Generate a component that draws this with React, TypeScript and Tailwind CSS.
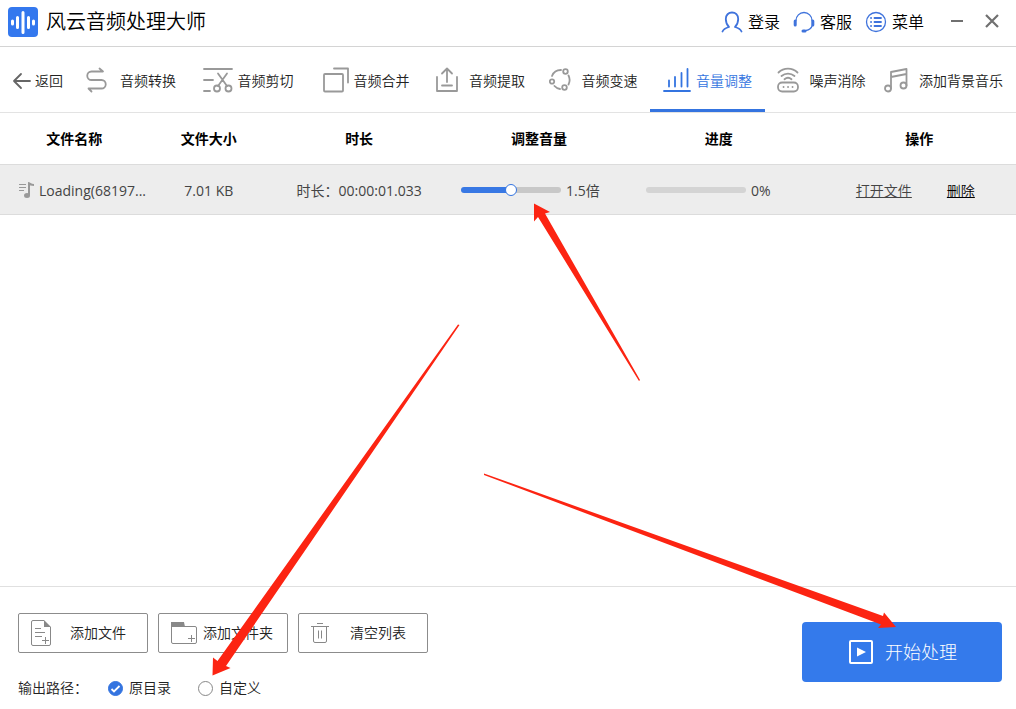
import { useState } from 'react'
import type { ReactNode } from 'react'

const Svg = ({ w, h = 26, children }: { w: number; h?: number; children: ReactNode }) => (
  <svg
    width={w}
    height={h}
    viewBox={`0 0 ${w} ${h}`}
    fill="none"
    stroke="currentColor"
    strokeWidth="1.8"
    strokeLinecap="round"
    strokeLinejoin="round"
    aria-hidden="true"
    className="shrink-0"
  >
    {children}
  </svg>
)

const ConvertIcon = () => (
  <Svg w={22}>
    <path d="M14.5 1.5 18 4.5H6.5a4 4 0 0 0 0 8.500h10a4.200 4.200 0 0 1 0 8.500H3.500l3 3" />
  </Svg>
)

const CutIcon = () => (
  <Svg w={30}>
    <path d="M1 2h28M1 13h9M1 24h6M15 6.500 24 19M24 6.500 15 19" />
    <circle cx="14" cy="21.500" r="3" />
    <circle cx="25.500" cy="21.500" r="3" />
  </Svg>
)

const MergeIcon = () => (
  <Svg w={26}>
    <rect x="1" y="7" width="19" height="17.500" rx="1" />
    <path d="M11 1.500h14v14" />
  </Svg>
)

const ExtractIcon = () => (
  <Svg w={22}>
    <path d="M1 10v14h20V10M11 15V2M6 6.500 11 1.500l5 5M6 18.500h10" />
  </Svg>
)

const SpeedIcon = () => (
  <Svg w={22}>
    <circle cx="16.500" cy="4.500" r="2.300" />
    <circle cx="3" cy="14.500" r="2.200" />
    <circle cx="15.500" cy="20.500" r="2.300" />
    <path d="M3 9a9.500 9.500 0 0 1 9-6M19.500 8.500a10 10 0 0 1 0 9M5.500 19a9 9 0 0 0 5.500 3" />
  </Svg>
)

const VolumeIcon = () => (
  <Svg w={28}>
    <path d="M1 24h26M6 19.500v-6M12 19.500V10M18.500 19.500V6M24.500 19.500V2" />
  </Svg>
)

const NoiseIcon = () => (
  <Svg w={22}>
    <rect x="1" y="15.500" width="20" height="9" rx="4.200" />
    <path d="M1.500 5.500a13.500 13.500 0 0 1 19 0M4.500 9a10 10 0 0 1 13 0M7.500 12.200a5.500 5.500 0 0 1 7 0M6.500 20h.1M11 20h.1M15.500 20h.1" />
  </Svg>
)

const MusicIcon = () => (
  <Svg w={24}>
    <circle cx="4" cy="21.500" r="3" />
    <circle cx="19.500" cy="18.500" r="3" />
    <path d="M7 21.500V5l15.500-3v16.500M7 10l15.500-3" />
  </Svg>
)

const tabs = [
  { label: '音频转换', Icon: ConvertIcon, gap: 'gap-[13px]' },
  { label: '音频剪切', Icon: CutIcon, gap: 'gap-[5px]' },
  { label: '音频合并', Icon: MergeIcon, gap: 'gap-[5px]' },
  { label: '音频提取', Icon: ExtractIcon, gap: 'gap-[11px]' },
  { label: '音频变速', Icon: SpeedIcon, gap: 'gap-[11px]' },
  { label: '音量调整', Icon: VolumeIcon, gap: 'gap-[5px]' },
  { label: '噪声消除', Icon: NoiseIcon, gap: 'gap-[11px]' },
  { label: '添加背景音乐', Icon: MusicIcon, gap: 'gap-[11px]' },
]

function TitleBar() {
  return (
    <header className="flex h-[47px] items-center border-b border-[#d4d4d4] pl-2 pr-4 pb-0.5">
      <svg width="30" height="30" viewBox="0 0 30 30" aria-hidden="true">
        <rect width="30" height="30" rx="4" fill="#3478ee" />
        <path
          d="M4.500 14v3M9.500 10.500v10M15 5.500v20M20.500 10.500v10M25.500 14v3"
          stroke="#fff"
          strokeWidth="3"
          strokeLinecap="round"
        />
      </svg>
      <h1 className="ml-2 flex-1 text-xl leading-6 font-[350] text-black">风云音频处理大师</h1>

      <div className="flex items-center gap-[13px] text-base leading-6 font-[350] text-black">
        <button type="button" className="flex items-center gap-[5px]">
          <span className="text-[#3f73dc]">
            <Svg w={22} h={22}>
              <path d="M1.500 20.500c1-2.500 3-3.500 6.500-4.500-2-2-3.200-4.500-3.200-8C4.800 4 7.500 1.500 11 1.500S17.200 4 17.200 8c0 3.500-1.200 6-3.200 8 3.500 1 5.500 2 6.500 4.500" />
            </Svg>
          </span>
          登录
        </button>
        <button type="button" className="flex items-center gap-[5px]">
          <span className="text-[#3f73dc]">
            <Svg w={22} h={22}>
              <path d="M3 9.500a8 8 0 0 1 16 0M19.500 14c-1 3-3.500 5-6.500 5.500" strokeWidth="1.300" />
              <path d="M2.200 10v4M19.800 10v4M10 20h2" strokeWidth="3" />
            </Svg>
          </span>
          客服
        </button>
        <button type="button" className="flex items-center gap-[5px]">
          <span className="text-[#3f73dc]">
            <Svg w={22} h={22}>
              <circle cx="11" cy="11" r="9.500" strokeWidth="1.300" />
              <path d="M6 7h.1M6 11h.1M6 15h.1M9.500 7H16M9.500 11H16M9.500 15H16" />
            </Svg>
          </span>
          菜单
        </button>
      </div>

      <div className="ml-6 flex items-center gap-5 text-[#707070]">
        <button type="button" aria-label="最小化">
          <Svg w={16} h={16}>
            <path d="M3 7h12" strokeWidth="2" strokeLinecap="butt" />
          </Svg>
        </button>
        <button type="button" aria-label="关闭">
          <Svg w={16} h={16}>
            <path d="m2 1 12 12M14 1 2 13" strokeWidth="2.200" strokeLinecap="butt" />
          </Svg>
        </button>
      </div>
    </header>
  )
}

function Toolbar() {
  const [active, setActive] = useState('音量调整')

  return (
    <nav className="grid h-[66px] grid-cols-[72fr_117fr_118fr_118fr_111fr_114fr_115fr_112fr_133fr_6fr] border-b border-[#e3e3e3] text-sm leading-5 font-[350] text-[#222]">
      <button type="button" className="flex items-center gap-1 whitespace-nowrap pl-3 pt-0.5">
        <span className="text-[#666]">
          <Svg w={19} h={18}>
            <path d="M18 9H2M9 2 2 9l7 7" />
          </Svg>
        </span>
        返回
      </button>
      {tabs.map(({ label, Icon, gap }) => {
        const isActive = label === active
        return (
          <button
            key={label}
            type="button"
            onClick={() => setActive(label)}
            className={`flex items-center justify-center whitespace-nowrap border-b-[3px] pt-1 ${gap} ${
              isActive ? 'border-[#3474e0] text-[#3474e0]' : 'border-transparent'
            }`}
          >
            <span className={isActive ? '' : 'text-[#999]'}>
              <Icon />
            </span>
            <span className="pt-0.5">{label}</span>
          </button>
        )
      })}
    </nav>
  )
}

function FileTable() {
  const [volume, setVolume] = useState(1.5)
  const percent = (volume - 1) * 100

  return (
    <table className="w-full table-fixed text-sm leading-5 text-[#444]">
      <colgroup>
        <col className="w-[14.6%]" />
        <col className="w-[11.9%]" />
        <col className="w-[17.7%]" />
        <col className="w-[17.7%]" />
        <col className="w-[17.7%]" />
        <col />
      </colgroup>
      <thead className="text-black">
        <tr className="h-[51px] border-b border-[#dcdcdc] [&>th]:pt-0.5">
          <th>文件名称</th>
          <th>文件大小</th>
          <th>时长</th>
          <th>调整音量</th>
          <th>进度</th>
          <th className="pl-[14px]">操作</th>
        </tr>
      </thead>
      <tbody>
        <tr className="h-[50px] border-b border-[#dcdcdc] bg-[#ededed] whitespace-nowrap [&>td]:pt-0.5">
          <td className="pl-[18px]">
            <div className="flex items-center gap-1 pt-0.5">
              <svg width="17" height="18" viewBox="0 0 17 18" fill="none" stroke="#999" aria-hidden="true" className="shrink-0">
                <path d="M1 2.500h7M1 5.500h7M1 8.500h5" />
                <path d="M11 13V1" strokeWidth="2" />
                <path d="M10 0c2 0 3 2 6 2v2c-3 0-4-1-6-1z" fill="#999" stroke="none" />
                <ellipse cx="9" cy="13.500" rx="3" ry="2.500" fill="#999" stroke="none" />
              </svg>
              Loading(68197...
            </div>
          </td>
          <td className="text-center">
            <div className="pt-0.5">7.01 KB</div>
          </td>
          <td className="text-center">
            <div className="pt-0.5">时长：00:00:01.033</div>
          </td>
          <td className="pl-3">
            <label className="flex items-center gap-[5px]">
              <input
                type="range"
                min="1"
                max="2"
                step="0.1"
                value={volume}
                onChange={(e) => setVolume(Number(e.target.value))}
                aria-label="调整音量"
                className="h-[6px] w-[100px] appearance-none rounded-sm [&::-webkit-slider-thumb]:size-3 [&::-webkit-slider-thumb]:appearance-none [&::-webkit-slider-thumb]:rounded-full [&::-webkit-slider-thumb]:border [&::-webkit-slider-thumb]:border-[#3474e0] [&::-webkit-slider-thumb]:bg-white"
                style={{ background: `linear-gradient(to right, #3878e4 ${percent}%, #c8c8c8 ${percent}%)` }}
              />
              <span className="pt-0.5">{volume}倍</span>
            </label>
          </td>
          <td className="pl-[17px]">
            <label className="flex items-center gap-[5px]">
              <progress
                max="100"
                value="0"
                aria-label="进度"
                className="h-[6px] w-[100px] appearance-none overflow-hidden rounded-sm [&::-webkit-progress-bar]:bg-[#d4d4d4] [&::-webkit-progress-value]:bg-[#3878e4]"
              />
              <span className="pt-0.5">0%</span>
            </label>
          </td>
          <td>
            <div className="flex justify-center gap-[35px] pl-[6px] pt-0.5 font-[350]">
              <a href="#open" className="underline">打开文件</a>
              <a href="#delete" className="text-black underline">删除</a>
            </div>
          </td>
        </tr>
      </tbody>
    </table>
  )
}

const fileButton =
  'flex h-10 w-[130px] items-center rounded-xs border border-[#8c8c8c] bg-white px-3 whitespace-nowrap'

function Footer() {
  const [target, setTarget] = useState('原目录')

  return (
    <footer className="flex items-start justify-between border-t border-[#e0e0e0] pb-[11px] pl-[18px] pr-[14px] pt-[26px]">
      <div className="flex flex-col gap-[25px] text-sm leading-5 font-[350] text-[#222]">
        <div className="flex gap-[10px]">
          <button type="button" className={`${fileButton} gap-[19px]`}>
            <svg width="20" height="26" viewBox="0 0 20 26" fill="none" stroke="#888" aria-hidden="true">
              <path d="M13 .5H2A1.500 1.500 0 0 0 .5 2v22A1.500 1.500 0 0 0 2 25.500h16a1.500 1.500 0 0 0 1.500-1.500V7" />
              <path d="M13 0v7h7z" fill="#888" stroke="none" />
              <path d="M4 8.500h6M4 12.500h10M4 16.500h7M11 20.500h7M14.500 17v7" />
            </svg>
            添加文件
          </button>
          <button type="button" className={`${fileButton} gap-[6px]`}>
            <svg width="26" height="22" viewBox="0 0 26 22" fill="none" stroke="#888" aria-hidden="true">
              <path d="M.5 4v16A1.500 1.500 0 0 0 2 21.500h22a1.500 1.500 0 0 0 1.500-1.500V6A1.500 1.500 0 0 0 24 4.500H.5" />
              <path d="M0 0h13l1 5H0z" fill="#888" stroke="none" />
              <path d="M17 16.500h7M20.500 13v7" />
            </svg>
            添加文件夹
          </button>
          <button type="button" className={`${fileButton} gap-[21px]`}>
            <svg width="18" height="20" viewBox="0 0 18 20" fill="none" stroke="#888" aria-hidden="true">
              <path d="M0 3.500h18M6 .5h6M2.500 3.500V18A1.500 1.500 0 0 0 4 19.500h10a1.500 1.500 0 0 0 1.500-1.500V3.500M7.500 7.500v8M10.500 7.500v8" />
            </svg>
            清空列表
          </button>
        </div>

        <fieldset className="flex items-center">
          <legend className="float-left mr-5">输出路径：</legend>
          {['原目录', '自定义'].map((name) => (
            <label key={name} className="mr-[27px] flex items-center gap-[6px]">
              <span className="grid place-items-center">
                <input
                  type="radio"
                  name="target"
                  checked={target === name}
                  onChange={() => setTarget(name)}
                  className="peer col-start-1 row-start-1 size-[15px] appearance-none rounded-full border border-[#888] bg-white checked:border-[#3474e0] checked:bg-[#3474e0]"
                />
                <svg
                  width="11"
                  height="11"
                  viewBox="0 0 11 11"
                  className="pointer-events-none invisible col-start-1 row-start-1 peer-checked:visible"
                  aria-hidden="true"
                >
                  <path d="M1.500 6 4 8.500 9.500 3" fill="none" stroke="#fff" strokeWidth="1.800" />
                </svg>
              </span>
              {name}
            </label>
          ))}
        </fieldset>
      </div>

      <button
        type="button"
        className="mt-[9px] flex h-[60px] w-[200px] items-center justify-center gap-3 rounded bg-[#347aeb] pl-0.5 text-lg leading-6 font-light text-white"
      >
        <svg width="24" height="24" viewBox="0 0 24 24" aria-hidden="true">
          <rect x="1" y="1" width="22" height="22" rx="1" fill="none" stroke="#fff" strokeWidth="2" />
          <path d="M8 7.500v9l9-4.500z" fill="#fff" />
        </svg>
        开始处理
      </button>
    </footer>
  )
}

// Red guide arrows drawn over the window
function GuideArrows() {
  return (
    <svg
      className="pointer-events-none absolute inset-0 size-full"
      viewBox="0 0 1016 709"
      preserveAspectRatio="none"
      fill="#fc2412"
      aria-hidden="true"
    >
      <path d="M534 203.500 550 212 545 213.500 640 380 639 381 538 217 534 221.500z" />
      <path d="M458 324.500 459.500 325 226 666 230.500 668 212.500 675.500 213 657.500 217.500 661z" />
      <path d="M484 473.500 883 616 884 612.500 896 627 878 628 881 624.500 484 475z" />
    </svg>
  )
}

export default function App() {
  return (
    <div className="relative flex min-h-screen flex-col bg-white font-['Open_Sans','Noto_Sans_CJK_SC',sans-serif]">
      <TitleBar />
      <Toolbar />
      <main className="flex-1">
        <FileTable />
      </main>
      <Footer />
      <GuideArrows />
    </div>
  )
}
